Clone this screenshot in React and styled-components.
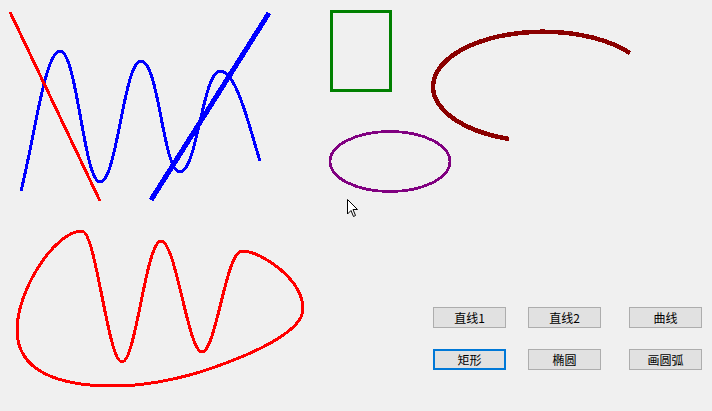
import React from "react";
import styled, { createGlobalStyle } from "styled-components";

const GlobalStyle = createGlobalStyle`
  html, body {
    margin: 0;
    padding: 0;
    background: #f0f0f0;
  }
  #root {
    width: 712px;
    height: 411px;
  }
`;

const Window = styled.div`
  display: grid;
  grid-template: 411px / 712px;
  width: 712px;
  height: 411px;
  background: #f0f0f0;
  overflow: hidden;
  font-family: "Noto Sans CJK SC", "Noto Sans", sans-serif;
`;

const Canvas = styled.svg`
  grid-area: 1 / 1;
  width: 712px;
  height: 411px;
  display: block;
`;

const ButtonPanel = styled.div`
  grid-area: 1 / 1;
  align-self: end;
  justify-self: end;
  margin: 0 10px 41px 0;
  display: grid;
  grid-template-columns: 95px 101px 73px;
  grid-auto-rows: 21px;
  row-gap: 21px;
  justify-items: start;
`;

const Button = styled.button`
  box-sizing: border-box;
  width: 73px;
  height: 21px;
  margin: 0;
  padding: 0;
  background: #e1e1e1;
  border: ${(p) => (p.$focused ? "2px solid #0078d7" : "1px solid #adadad")};
  border-radius: 0;
  color: #000;
  font-family: "Noto Sans CJK SC", "Noto Sans", sans-serif;
  font-size: 12px;
  line-height: 1;
  display: flex;
  align-items: center;
  justify-content: center;
  outline: none;
  cursor: default;
`;

const Cursor = styled.svg`
  grid-area: 1 / 1;
  align-self: start;
  justify-self: start;
  margin: 198px 0 0 346px;
  width: 13px;
  height: 20px;
  display: block;
`;

const buttons = [
  { label: "直线1" },
  { label: "直线2" },
  { label: "曲线" },
  { label: "矩形", focused: true },
  { label: "椭圆" },
  { label: "画圆弧" },
];

const wavePath =
  "M21,191 C34,140 45,51 60,51 C77,51 84,182 100,182 C117,182 124,61 141,61 C159,61 163,172 180,172 C197,172 203,71 220,71 C237,71 250,130 260,161";

const blobPath =
  "M82,231 C96,231 108,362 122,362 C136,362 146,241 161,241 C176,241 188,352 202,352 C216,352 226,251 242,251 C262,251 303,280 303,309 C303,332 250,356 200,372 C170,381 140,386 113,386 C60,386 17,372 17,330 C17,290 55,231 82,231 Z";

export default function App() {
  return (
    <>
      <GlobalStyle />
      <Window>
        <Canvas viewBox="0 0 712 411" shapeRendering="crispEdges">
          <path d={wavePath} fill="none" stroke="#0000ff" strokeWidth="3" />
          <line x1="10" y1="12" x2="100" y2="201" stroke="#ff0000" strokeWidth="3" />
          <line x1="151" y1="200" x2="269" y2="13" stroke="#0000ff" strokeWidth="5" />
          <path d={blobPath} fill="none" stroke="#ff0000" strokeWidth="3" />
          <rect x="331" y="11.5" width="59" height="79" fill="none" stroke="#008000" strokeWidth="3" />
          <ellipse cx="390" cy="161.5" rx="60" ry="30" fill="none" stroke="#800080" strokeWidth="2.8" />
          <path d="M630,53 A110,55 0 1 0 509,139" fill="none" stroke="#8b0000" strokeWidth="4.5" />
        </Canvas>
        <Cursor viewBox="0 0 13 20">
          <path
            d="M1.5,1.5 L1.5,16 L5,12.5 L7.5,18.5 L9.5,17.5 L7,11.5 L11.5,11.5 Z"
            fill="#ffffff"
            stroke="#000000"
            strokeWidth="1"
            strokeLinejoin="miter"
          />
        </Cursor>
        <ButtonPanel>
          {buttons.map((b) => (
            <Button key={b.label} $focused={b.focused}>
              {b.label}
            </Button>
          ))}
        </ButtonPanel>
      </Window>
    </>
  );
}
